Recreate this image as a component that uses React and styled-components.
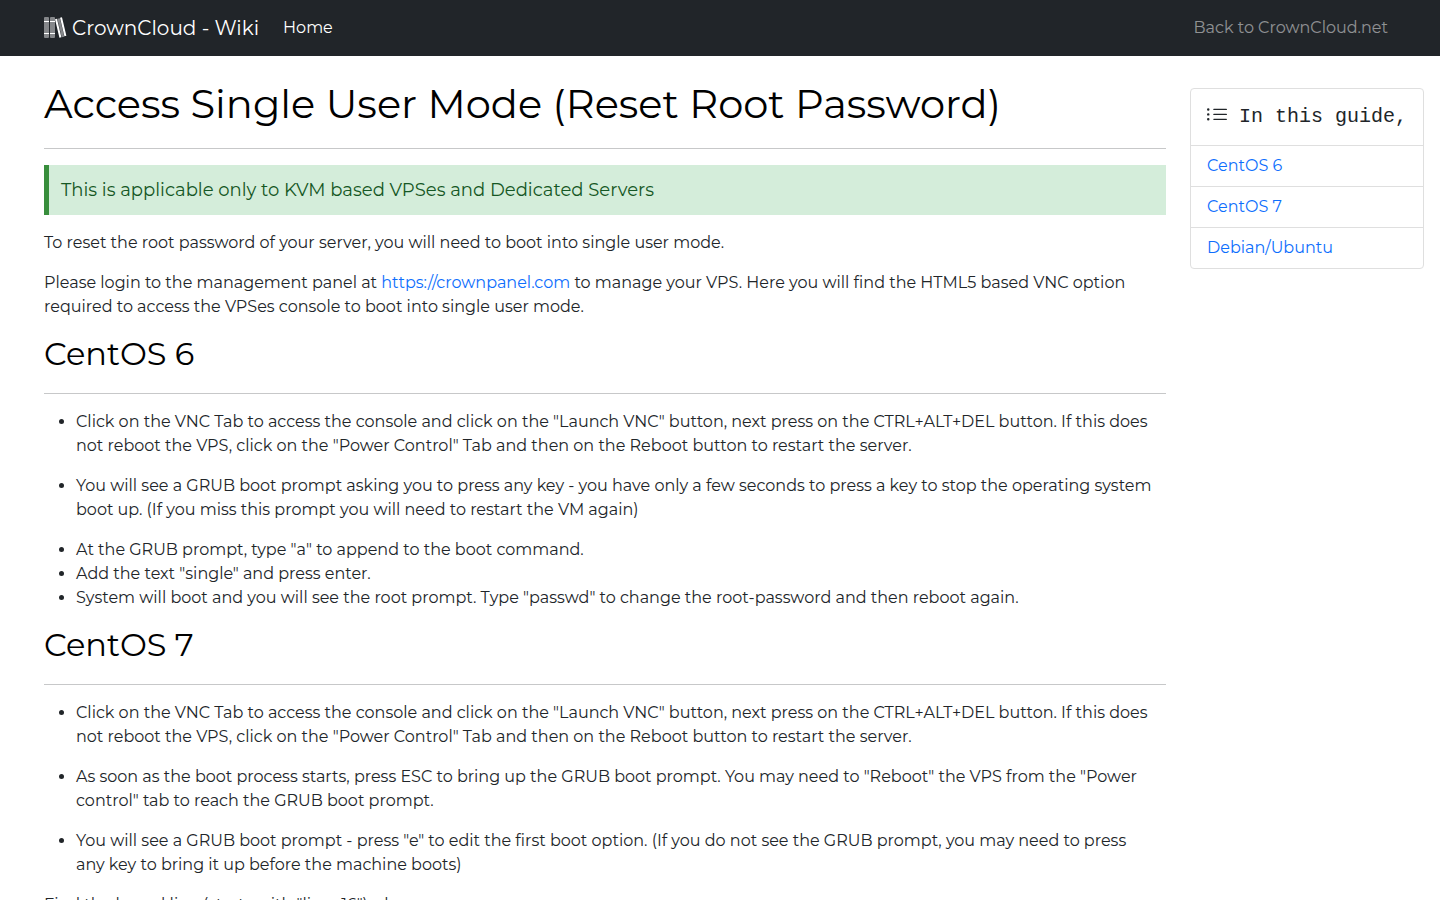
import React from "react";
import styled, { createGlobalStyle } from "styled-components";

const sections = [
    {
        id: "centos-6",
        title: "CentOS 6",
        items: [
            { spaced: true, text: 'Click on the VNC Tab to access the console and click on the "Launch VNC" button, next press on the CTRL+ALT+DEL button. If this does not reboot the VPS, click on the "Power Control" Tab and then on the Reboot button to restart the server.' },
            { spaced: true, text: "You will see a GRUB boot prompt asking you to press any key - you have only a few seconds to press a key to stop the operating system boot up. (If you miss this prompt you will need to restart the VM again)" },
            { text: 'At the GRUB prompt, type "a" to append to the boot command.' },
            { text: 'Add the text "single" and press enter.' },
            { text: 'System will boot and you will see the root prompt. Type "passwd" to change the root-password and then reboot again.' },
        ],
    },
    {
        id: "centos-7",
        title: "CentOS 7",
        items: [
            { spaced: true, text: 'Click on the VNC Tab to access the console and click on the "Launch VNC" button, next press on the CTRL+ALT+DEL button. If this does not reboot the VPS, click on the "Power Control" Tab and then on the Reboot button to restart the server.' },
            { spaced: true, text: 'As soon as the boot process starts, press ESC to bring up the GRUB boot prompt. You may need to "Reboot" the VPS from the "Power control" tab to reach the GRUB boot prompt.' },
            { text: 'You will see a GRUB boot prompt - press "e" to edit the first boot option. (If you do not see the GRUB prompt, you may need to press any key to bring it up before the machine boots)' },
        ],
        after: 'Find the kernel line (starts with "linux16"), change',
    },
];

const guideLinks = [
    { href: "#centos-6", label: "CentOS 6" },
    { href: "#centos-7", label: "CentOS 7" },
    { href: "#debian-ubuntu", label: "Debian/Ubuntu" },
];

const BooksIcon = () => (
    <svg width="24" height="24" viewBox="0 0 24 24" aria-hidden="true">
        <rect x="0" y="1" width="5" height="21" rx="1" fill="#85878a" />
        <rect x="6" y="1" width="5" height="21" rx="1" fill="#85878a" />
        <path d="M0 5.5h5M6 5.5h5M0 17.5h5M6 17.5h5" stroke="#fff" strokeWidth="1" />
        <path d="M14.6 2.5l4.4 18.5" stroke="#85878a" strokeWidth="2.6" />
        <path d="M12 3l4.4 18.5M17 1.500l4.4 18.5" stroke="#fff" strokeWidth="2" />
    </svg>
);

const ListIcon = () => (
    <svg width="20" height="20" viewBox="0 0 16 16" fill="currentColor" aria-hidden="true">
        <path fillRule="evenodd" d="M5 11.5a.5.5 0 0 1 .5-.5h10a.5.5 0 0 1 0 1h-10a.5.5 0 0 1-.5-.5zm0-4a.5.5 0 0 1 .5-.5h10a.5.5 0 0 1 0 1h-10a.5.5 0 0 1-.5-.5zm0-4a.5.5 0 0 1 .5-.5h10a.5.5 0 0 1 0 1h-10a.5.5 0 0 1-.5-.5zm-4 1a1 1 0 1 0 0-2 1 1 0 0 0 0 2zm0 4a1 1 0 1 0 0-2 1 1 0 0 0 0 2zm0 4a1 1 0 1 0 0-2 1 1 0 0 0 0 2z" />
    </svg>
);

const App = () => {
    return (
        <>
            <GlobalStyle />
            <Navbar>
                <Brand href="#top"><BooksIcon />CrownCloud - Wiki</Brand>
                <NavLink href="#home">Home</NavLink>
                <BackLink href="#crowncloud">Back to CrownCloud.net</BackLink>
            </Navbar>
            <Layout>
                <main>
                    <Title>Access Single User Mode (Reset Root Password)</Title>
                    <Rule />
                    <Notice>This is applicable only to KVM based VPSes and Dedicated Servers</Notice>
                    <Paragraph>To reset the root password of your server, you will need to boot into single user mode.</Paragraph>
                    <Paragraph>
                        Please login to the management panel at <a href="#crownpanel">https://crownpanel.com</a> to manage your VPS. Here you will find the HTML5 based VNC option required to access the VPSes console to boot into single user mode.
                    </Paragraph>
                    {sections.map((section) => (
                        <section key={section.id} id={section.id}>
                            <Heading>{section.title}</Heading>
                            <Rule />
                            <Steps>
                                {section.items.map((item) => (
                                    <Step key={item.text} $spaced={item.spaced}>{item.text}</Step>
                                ))}
                            </Steps>
                            {section.after && <Paragraph>{section.after}</Paragraph>}
                        </section>
                    ))}
                </main>
                <aside>
                    <Guide>
                        <GuideTitle><ListIcon />In this guide,</GuideTitle>
                        {guideLinks.map((link) => (
                            <GuideLink key={link.href} href={link.href}>{link.label}</GuideLink>
                        ))}
                    </Guide>
                </aside>
            </Layout>
        </>
    );
};

const GlobalStyle = createGlobalStyle`
    * {
        box-sizing: border-box;
    }
    body {
        margin: 0;
        background: #fff;
        color: #212529;
        font: 400 16px/24px Montserrat, Inter, sans-serif;
    }
    a {
        color: #0d6efd;
        text-decoration: none;
    }
`;

const Navbar = styled.nav`
    display: flex;
    align-items: center;
    gap: 24px;
    height: 56px;
    padding: 0 52px 0 44px;
    background: #212529;
`;

const Brand = styled.a`
    display: flex;
    align-items: center;
    gap: 4px;
    color: #fff;
    font-size: 20px;
    line-height: 30px;
`;

const NavLink = styled.a`
    color: #fff;
`;

const BackLink = styled.a`
    margin-left: auto;
    color: rgba(255, 255, 255, 0.5);
`;

const Layout = styled.div`
    display: grid;
    grid-template-columns: minmax(0, 1fr) 234px;
    gap: 24px;
    padding: 24px 16px 0 44px;
`;

const Title = styled.h1`
    margin: 0 0 20px;
    color: #000;
    font-size: 40px;
    font-weight: 400;
    line-height: 48px;
`;

const Heading = styled.h2`
    margin: 0 0 20px;
    color: #000;
    font-size: 32px;
    font-weight: 400;
    line-height: 38px;
`;

const Rule = styled.hr`
    height: 1px;
    margin: 0 0 16px;
    border: 0;
    background: #c7c8c9;
`;

const Notice = styled.div`
    margin-bottom: 16px;
    padding: 12px;
    border-left: 5px solid #388e3c;
    background: #d4edda;
    color: #155724;
    font-size: 18px;
    line-height: 26px;
`;

const Paragraph = styled.p`
    margin: 0 0 16px;
`;

const Steps = styled.ul`
    margin: 0 0 16px;
    padding: 0 12px 0 32px;
`;

const Step = styled.li`
    margin-bottom: ${(props) => (props.$spaced ? "16px" : "0")};
`;

const Guide = styled.div`
    display: flex;
    flex-direction: column;
    margin-top: 8px;
    border: 1px solid #dfdfdf;
    border-radius: 4px;
`;

const GuideTitle = styled.div`
    display: flex;
    gap: 12px;
    padding: 16px;
    font-family: "Liberation Mono", monospace;
    font-size: 20px;
    line-height: 24px;
    white-space: nowrap;
`;

const GuideLink = styled.a`
    padding: 8px 16px;
    border-top: 1px solid #dfdfdf;
`;

export default App;
